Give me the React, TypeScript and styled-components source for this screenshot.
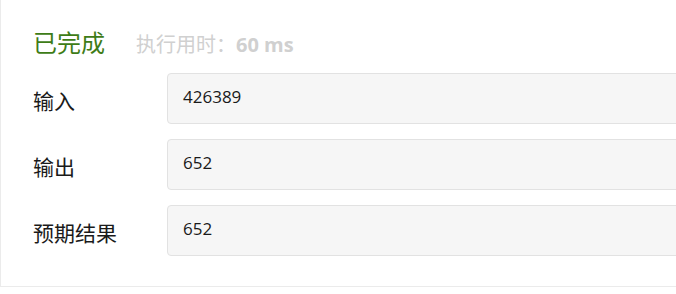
import React from "react";
import styled, { createGlobalStyle } from "styled-components";

const Global = createGlobalStyle`
  html, body { margin: 0; padding: 0; background: #fff; overflow: hidden; }
  body { font-family: "Open Sans", "Noto Sans CJK SC", sans-serif; }
`;

const Panel = styled.div`
  width: 760px;
  box-sizing: border-box;
  border-left: 1px solid #ebebeb;
  border-bottom: 1px solid #ebebeb;
  padding: 26px 0 30px 32px;
  height: 287px;
  background: #fff;
`;

const Header = styled.div`
  display: flex;
  align-items: center;
  gap: 31px;
  height: 32px;
  margin-bottom: 15px;
`;

const Status = styled.span`
  font-family: "Noto Sans CJK SC", sans-serif;
  font-size: 24px;
  color: #3e7c17;
  line-height: 32px;
`;

const Runtime = styled.span`
  font-family: "Noto Sans CJK SC", sans-serif;
  font-size: 20px;
  color: #d0d0d0;
  line-height: 32px;
  padding-top: 4px;
`;

const Strong = styled.b`
  font-family: "Open Sans", sans-serif;
  font-weight: 700;
`;

const Rows = styled.div`
  display: grid;
  grid-template-columns: 134px 1fr;
  grid-auto-rows: 51px;
  row-gap: 15px;
  align-items: center;
`;

const Label = styled.div`
  font-family: "Noto Sans CJK SC", sans-serif;
  font-size: 21px;
  color: #1a1a1a;
  padding-top: 3px;
`;

const Value = styled.div`
  height: 51px;
  box-sizing: border-box;
  display: flex;
  align-items: center;
  padding: 0 15px 4px;
  background: #f6f6f6;
  border: 1px solid #e2e2e2;
  border-radius: 4px;
  font-family: "Open Sans", sans-serif;
  font-size: 17px;
  color: #1a1a1a;
`;

const rows = [
  { label: "输入", value: "426389" },
  { label: "输出", value: "652" },
  { label: "预期结果", value: "652" },
];

export default function App() {
  return (
    <>
      <Global />
      <Panel>
        <Header>
          <Status>已完成</Status>
          <Runtime>
            执行用时：<Strong>60 ms</Strong>
          </Runtime>
        </Header>
        <Rows>
          {rows.map((r) => (
            <React.Fragment key={r.label}>
              <Label>{r.label}</Label>
              <Value>{r.value}</Value>
            </React.Fragment>
          ))}
        </Rows>
      </Panel>
    </>
  );
}
